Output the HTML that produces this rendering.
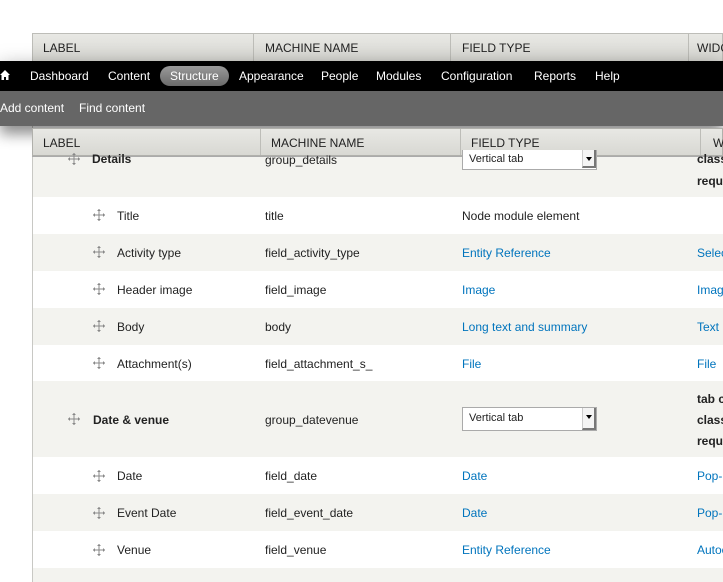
<!DOCTYPE html>
<html><head><meta charset="utf-8"><style>
*{margin:0;padding:0;box-sizing:border-box}
body{width:723px;height:582px;overflow:hidden;background:#fff;position:relative;font-family:"Liberation Sans",sans-serif;font-size:12px;color:#222}
.a{position:absolute;white-space:nowrap}
.hdr{position:absolute;left:32px;right:0;background:linear-gradient(#e8e8e4,#d8d8d3);border:1px solid #bdbdb8;font-size:12px;color:#222}
.hdr span{position:absolute;top:7px}
.hdr i{position:absolute;top:0;bottom:0;width:1px;background:#bdbdb8}
.row{position:absolute;left:33px;right:0}
.g{background:#f3f3ef}
.l{color:#0074bd}
.b{font-weight:bold}
svg.d{position:absolute}
.sel{position:absolute;width:135px;height:22px;background:#fff;border:1px solid #aaa;font-size:11px;padding:3px 6px}
.sel b{position:absolute;right:0;top:0;width:14px;height:20px;border-left:1px solid #ccc;border-right:2px solid #777;border-bottom:2px solid #777;background:#f4f4f4}
.sel b:after{content:"";position:absolute;left:3px;top:7px;border:3px solid transparent;border-top:4px solid #000}
</style></head><body>
<div style="position:absolute;left:32px;top:33px;bottom:0;width:1px;background:#c8c8c4"></div>
<div class="hdr" style="top:33px;height:29px"><span style="left:10px">LABEL</span><i style="left:220px"></i><span style="left:232px">MACHINE NAME</span><i style="left:417px"></i><span style="left:429px">FIELD TYPE</span><i style="left:655px"></i><span style="left:664px">WIDGET</span></div>

<div class="row g" style="top:155px;height:42px"></div>
<div class="row" style="top:234px;height:37px;background:#f3f3ef"></div>
<div class="row g" style="top:308px;height:37px"></div>
<div class="row g" style="top:381px;height:76px"></div>
<div class="row g" style="top:494px;height:37px"></div>
<div class="row g" style="top:568px;height:14px"></div>

<div style="position:absolute;left:0;right:0;top:61px;height:30px;background:#000;box-shadow:0 8px 22px rgba(0,0,0,.5)"></div>
<div style="position:absolute;left:0;right:0;top:91px;height:35px;background:#666;box-shadow:0 8px 14px rgba(0,0,0,.45)"></div>
<svg class="d" style="left:0;top:70px" width="10" height="11" viewBox="0 0 10 11"><path d="M5 0L10 5H8.5V10H6V7H4V10H1.5V5H0Z" fill="#fff"/></svg>
<div class="a" style="top:69px;left:30px;color:#fff">Dashboard</div>
<div class="a" style="top:69px;left:108px;color:#fff">Content</div>
<div class="a" style="top:66px;left:160px;width:69px;height:20px;border-radius:10px;background:linear-gradient(#9a9a9a,#6a6a6a)"></div>
<div class="a" style="top:69px;left:170px;color:#fff">Structure</div>
<div class="a" style="top:69px;left:239px;color:#fff">Appearance</div>
<div class="a" style="top:69px;left:321px;color:#fff">People</div>
<div class="a" style="top:69px;left:376px;color:#fff">Modules</div>
<div class="a" style="top:69px;left:441px;color:#fff">Configuration</div>
<div class="a" style="top:69px;left:534px;color:#fff">Reports</div>
<div class="a" style="top:69px;left:595px;color:#fff">Help</div>
<div class="a" style="top:101px;left:0;color:#fff">Add content</div>
<div class="a" style="top:101px;left:79px;color:#fff">Find content</div>

<div class="hdr" style="top:128px;height:28px;border-color:#b0b0ab;box-shadow:0 1px 0 #aaa"><span style="left:10px">LABEL</span><i style="left:227px"></i><span style="left:238px">MACHINE NAME</span><i style="left:427px"></i><span style="left:438px">FIELD TYPE</span><i style="left:667px"></i><span style="left:680px">WIDGET</span></div>

<svg width="0" height="0" style="position:absolute"><defs><g id="dr"><path d="M6 0V12M0 6H12" stroke="#888" stroke-width="1"/><path d="M6 0L4 2H8ZM6 12L4 10H8ZM0 6L2 4V8ZM12 6L10 4V8Z" fill="#888"/></g></defs></svg>

<div class="sel" style="left:462px;top:150px;height:20px;border-top:none">Vertical tab<b style="height:18px"></b></div>
<div class="a b" style="top:152px;left:92px">Details</div>
<div class="a" style="top:153px;left:265px">group_details</div>
<div class="a b" style="top:152px;left:697px">class</div>
<div class="a b" style="top:174px;left:697px">requ</div>
<svg class="d" style="left:68px;top:153px" width="12" height="12"><use href="#dr"/></svg>

<svg class="d" style="left:93px;top:209px" width="12" height="12"><use href="#dr"/></svg>
<div class="a" style="top:209px;left:117px">Title</div>
<div class="a" style="top:209px;left:265px">title</div>
<div class="a" style="top:209px;left:462px">Node module element</div>

<svg class="d" style="left:93px;top:246px" width="12" height="12"><use href="#dr"/></svg>
<div class="a" style="top:246px;left:117px">Activity type</div>
<div class="a" style="top:246px;left:265px">field_activity_type</div>
<div class="a l" style="top:246px;left:462px">Entity Reference</div>
<div class="a l" style="top:246px;left:697px">Select</div>

<svg class="d" style="left:93px;top:283px" width="12" height="12"><use href="#dr"/></svg>
<div class="a" style="top:283px;left:117px">Header image</div>
<div class="a" style="top:283px;left:265px">field_image</div>
<div class="a l" style="top:283px;left:462px">Image</div>
<div class="a l" style="top:283px;left:697px">Image</div>

<svg class="d" style="left:93px;top:320px" width="12" height="12"><use href="#dr"/></svg>
<div class="a" style="top:320px;left:117px">Body</div>
<div class="a" style="top:320px;left:265px">body</div>
<div class="a l" style="top:320px;left:462px">Long text and summary</div>
<div class="a l" style="top:320px;left:697px">Text</div>

<svg class="d" style="left:93px;top:357px" width="12" height="12"><use href="#dr"/></svg>
<div class="a" style="top:357px;left:117px">Attachment(s)</div>
<div class="a" style="top:357px;left:265px">field_attachment_s_</div>
<div class="a l" style="top:357px;left:462px">File</div>
<div class="a l" style="top:357px;left:697px">File</div>

<svg class="d" style="left:68px;top:413px" width="12" height="12"><use href="#dr"/></svg>
<div class="a b" style="top:413px;left:93px">Date &amp; venue</div>
<div class="a" style="top:413px;left:265px">group_datevenue</div>
<div class="sel" style="left:462px;top:407px;height:24px;padding-top:4px">Vertical tab<b style="height:22px"></b></div>
<div class="a b" style="top:392px;left:697px">tab c</div>
<div class="a b" style="top:413px;left:697px">class</div>
<div class="a b" style="top:434px;left:697px">requ</div>

<svg class="d" style="left:93px;top:470px" width="12" height="12"><use href="#dr"/></svg>
<div class="a" style="top:469px;left:117px">Date</div>
<div class="a" style="top:469px;left:265px">field_date</div>
<div class="a l" style="top:469px;left:462px">Date</div>
<div class="a l" style="top:469px;left:697px">Pop-up</div>

<svg class="d" style="left:93px;top:507px" width="12" height="12"><use href="#dr"/></svg>
<div class="a" style="top:506px;left:117px">Event Date</div>
<div class="a" style="top:506px;left:265px">field_event_date</div>
<div class="a l" style="top:506px;left:462px">Date</div>
<div class="a l" style="top:506px;left:697px">Pop-up</div>

<svg class="d" style="left:93px;top:544px" width="12" height="12"><use href="#dr"/></svg>
<div class="a" style="top:543px;left:117px">Venue</div>
<div class="a" style="top:543px;left:265px">field_venue</div>
<div class="a l" style="top:543px;left:462px">Entity Reference</div>
<div class="a l" style="top:543px;left:697px">Autoc</div>
</body></html>
